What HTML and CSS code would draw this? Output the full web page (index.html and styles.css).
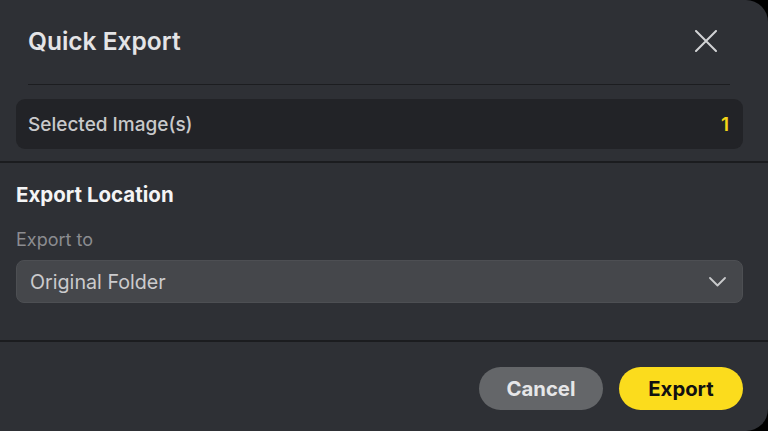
FILE: index.html
```html
<!DOCTYPE html>
<html lang="en">
<head>
<meta charset="utf-8">
<title>Quick Export</title>
<link rel="stylesheet" href="styles.css">
</head>
<body>
<div class="dialog">
  <div class="header">
    <h1 class="title">Quick Export</h1>
    <button class="close" aria-label="Close">
      <svg width="22" height="22" viewBox="0 0 22 22"><path d="M1 1 L21 21 M21 1 L1 21" stroke="#d2d3d5" stroke-width="2" stroke-linecap="round" fill="none"/></svg>
    </button>
  </div>
  <div class="summary">
    <span class="summary-label">Selected Image(s)</span>
    <span class="summary-count">1</span>
  </div>
  <div class="divider"></div>
  <div class="section">
    <h2 class="section-title">Export Location</h2>
    <div class="field-label">Export to</div>
    <div class="select">
      <span class="select-value">Original Folder</span>
      <svg class="chevron" width="17" height="10" viewBox="0 0 17 10"><path d="M1 1 L8.5 8.5 L16 1" stroke="#c9cacc" stroke-width="1.8" stroke-linecap="round" stroke-linejoin="round" fill="none"/></svg>
    </div>
  </div>
  <div class="divider divider-bottom"></div>
  <div class="footer">
    <button class="btn btn-cancel">Cancel</button>
    <button class="btn btn-export">Export</button>
  </div>
</div>
</body>
</html>
```
FILE: styles.css
```css
* { box-sizing: border-box; }
html, body { margin: 0; padding: 0; }
body {
  background: #000;
  width: 768px;
  height: 431px;
  overflow: hidden;
  font-family: Inter, "Noto Sans", "Liberation Sans", sans-serif;
}
.dialog {
  width: 768px;
  height: 431px;
  background: #2e3035;
  border-radius: 0 22px 22px 0;
  display: flex;
  flex-direction: column;
}
.header {
  height: 85px;
  margin: 0 38px 0 28px;
  border-bottom: 1px solid #1c1d20;
  display: flex;
  align-items: center;
  justify-content: space-between;
  padding-bottom: 2px;
}
.title {
  margin: 0;
  font-size: 24.5px;
  line-height: 30px;
  font-weight: 600;
  color: #e4e4e6;
}
.close {
  background: none;
  border: 0;
  padding: 0;
  margin-right: 13px;
  width: 22px;
  height: 22px;
  display: flex;
}
.summary {
  margin: 14px 25px 0 16px;
  height: 50px;
  background: #222327;
  border-radius: 9px;
  display: flex;
  align-items: center;
  justify-content: space-between;
  padding: 0 14px 0 12px;
}
.summary-label {
  font-size: 19px;
  font-weight: 500;
  color: #c9c9cb;
}
.summary-count {
  font-size: 19px;
  font-weight: 600;
  color: #f5d617;
}
.divider {
  height: 2px;
  background: #1b1c1f;
  margin-top: 12px;
}
.section {
  padding: 0 25px 0 16px;
}
.section-title {
  margin: 20px 0 0;
  font-size: 20.5px;
  line-height: 24px;
  font-weight: 700;
  color: #f4f4f5;
}
.field-label {
  margin-top: 22px;
  line-height: 22px;
  font-size: 18px;
  color: #8b8c90;
}
.select {
  margin-top: 9px;
  height: 43px;
  background: #45474b;
  border: 1px solid #4d4f53;
  border-radius: 8px;
  display: flex;
  align-items: center;
  justify-content: space-between;
  padding: 0 16px 0 13px;
}
.select-value {
  font-size: 19.7px;
  color: #cbcbcd;
}
.chevron { display: block; }
.divider-bottom {
  margin-top: 37px;
}
.footer {
  display: flex;
  justify-content: flex-end;
  gap: 16px;
  padding: 25px 25px 0 0;
}
.btn {
  width: 124px;
  height: 43px;
  border: 0;
  border-radius: 22px;
  font-family: Inter, "Noto Sans", "Liberation Sans", sans-serif;
  font-size: 20.3px;
  font-weight: 700;
}
.btn-cancel {
  background: #646669;
  color: #e6e6e8;
}
.btn-export {
  background: #fbdc1d;
  color: #111;
}
```
